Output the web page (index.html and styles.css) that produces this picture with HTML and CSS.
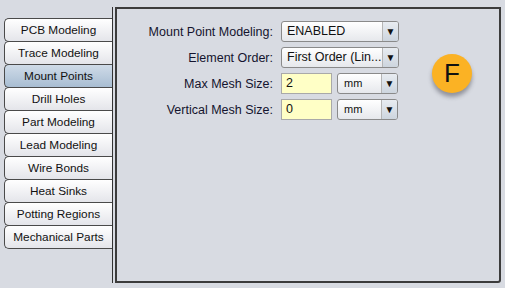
FILE: index.html
```html
<!DOCTYPE html>
<html>
<head>
<meta charset="utf-8">
<link rel="stylesheet" href="styles.css">
</head>
<body>
<div class="app">
  <div class="tabs">
    <div class="tab">PCB Modeling</div>
    <div class="tab">Trace Modeling</div>
    <div class="tab active">Mount Points</div>
    <div class="tab">Drill Holes</div>
    <div class="tab">Part Modeling</div>
    <div class="tab">Lead Modeling</div>
    <div class="tab">Wire Bonds</div>
    <div class="tab">Heat Sinks</div>
    <div class="tab">Potting Regions</div>
    <div class="tab">Mechanical Parts</div>
  </div>
  <div class="panel">
    <div class="form">
      <div class="label">Mount Point Modeling:</div>
      <div class="select wide"><span class="val">ENABLED</span><span class="arrow">&#9660;</span></div>
      <div class="label">Element Order:</div>
      <div class="select wide"><span class="val">First Order (Lin...</span><span class="arrow">&#9660;</span></div>
      <div class="label">Max Mesh Size:</div>
      <div class="pair"><div class="input">2</div><div class="select unit"><span class="val">mm</span><span class="arrow">&#9660;</span></div></div>
      <div class="label">Vertical Mesh Size:</div>
      <div class="pair"><div class="input">0</div><div class="select unit"><span class="val">mm</span><span class="arrow">&#9660;</span></div></div>
    </div>
    <div class="badge">F</div>
  </div>
</div>
</body>
</html>
```
FILE: styles.css
```css
html, body {
  margin: 0;
  padding: 0;
}
body {
  background: #d8dbe2;
  width: 505px;
  height: 288px;
  overflow: hidden;
  font-family: "Liberation Sans", Arial, sans-serif;
  font-size: 12px;
  color: #111;
}
.app {
  display: flex;
  padding-top: 7px;
  height: 276px;
}
.tabs {
  width: 108px;
  padding-left: 4px;
  padding-top: 11px;
  border-right: 1px solid #333;
  box-sizing: content-box;
  display: flex;
  flex-direction: column;
}
.tab {
  height: 22px;
  line-height: 22px;
  text-align: center;
  border: 1px solid #4a4a4a;
  border-right: none;
  border-radius: 5px 0 0 5px;
  margin-bottom: -1px;
  background: linear-gradient(#ffffff, #e4e5ea);
  font-size: 11.8px;
  color: #111;
  white-space: nowrap;
}
.tab.active {
  background: linear-gradient(#cfdbe8, #a8bdd2);
}
.panel {
  margin-left: 2px;
  width: 382px;
  height: 272px;
  border: 2px solid #3c3c3c;
  border-bottom-right-radius: 3px;
  position: relative;
}
.form {
  display: grid;
  grid-template-columns: 156px auto;
  column-gap: 8px;
  row-gap: 5px;
  padding-top: 12px;
  align-items: center;
}
.label {
  text-align: right;
  color: #14142e;
  font-size: 12.5px;
  white-space: nowrap;
}
.select {
  height: 19px;
  border: 1px solid #8a8a8a;
  border-radius: 3px;
  background: linear-gradient(#ffffff, #e6e8ec);
  display: flex;
  box-sizing: content-box;
}
.select.wide {
  width: 116px;
}
.select .val {
  flex: 1;
  padding-left: 5px;
  line-height: 19px;
  white-space: nowrap;
  overflow: hidden;
  font-size: 12.5px;
  color: #111;
}
.select .arrow {
  width: 15px;
  border-left: 1px solid #b5b5b5;
  line-height: 19px;
  text-align: center;
  font-size: 10px;
  color: #111;
  background: linear-gradient(#e8ecf1, #cdd5de);
  border-radius: 0 2px 2px 0;
}
.pair {
  display: flex;
  gap: 5px;
}
.input {
  width: 45px;
  height: 19px;
  line-height: 19px;
  padding-left: 4px;
  border: 1px solid #a9a9a9;
  background: #ffffc6;
  font-size: 12.5px;
  color: #111;
}
.select.unit {
  width: 59px;
}
.select.unit .val {
  font-size: 11px;
  padding-left: 6px;
}
.badge {
  position: absolute;
  left: 315px;
  top: 45px;
  width: 40px;
  height: 39px;
  border-radius: 50%;
  background: #fbb224;
  box-shadow: 0 4px 4px rgba(60, 60, 70, 0.45);
  text-align: center;
  line-height: 39px;
  font-size: 26px;
  color: #111;
}
```
